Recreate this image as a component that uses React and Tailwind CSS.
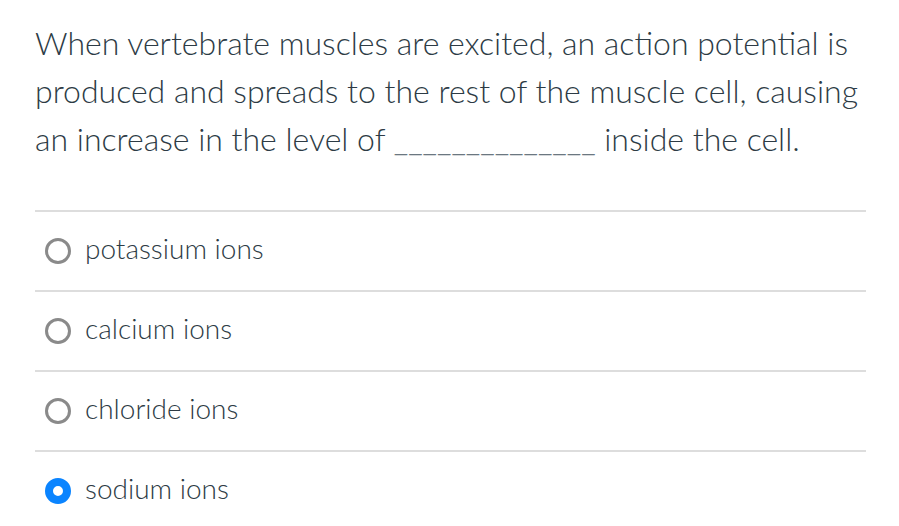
export default function App() {
  const options = [
    { label: "potassium ions", selected: false },
    { label: "calcium ions", selected: false },
    { label: "chloride ions", selected: false },
    { label: "sodium ions", selected: true },
  ];
  return (
    <div
      className="w-[899px] h-[526px] bg-white overflow-hidden pl-[35px] pr-[33px] pt-[19px] text-[#2d3b45]"
      style={{ fontFamily: "Lato, 'Noto Sans', sans-serif" }}
    >
      <p className="text-[32px] leading-[48px] font-light">
        When vertebrate muscles are excited, an action potential is produced and spreads to the rest of the muscle cell, causing an increase in the level of{" "}
        <span className="text-[#6b7780]">______________</span> inside the cell.
      </p>
      <div className="mt-[47px]">
        {options.map((o) => (
          <div key={o.label} className="border-t-2 border-[#dddddd] h-[80px] flex items-center">
            <div className="w-[50px] flex pl-[10px]">
              {o.selected ? (
                <span className="w-[26px] h-[26px] rounded-full border-[8px] border-[#0a84ff] bg-white box-border" />
              ) : (
                <span className="w-[26px] h-[26px] rounded-full border-[3px] border-[#8a8a8a] bg-white box-border" />
              )}
            </div>
            <span className="text-[28px] font-light leading-none mb-[6px]">{o.label}</span>
          </div>
        ))}
      </div>
    </div>
  );
}
